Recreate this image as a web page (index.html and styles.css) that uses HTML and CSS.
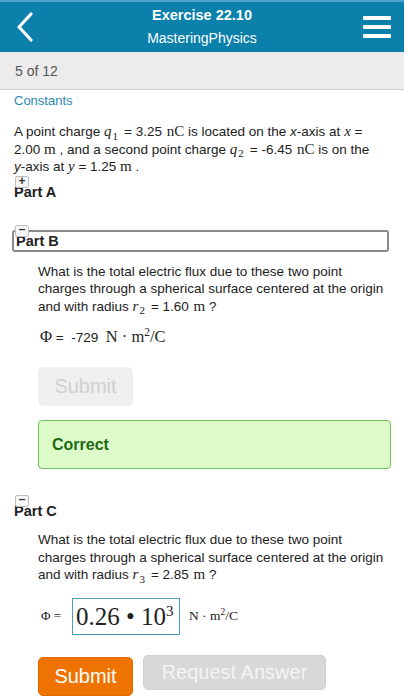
FILE: index.html
```html
<!DOCTYPE html>
<html>
<head>
<meta charset="utf-8">
<link rel="stylesheet" href="styles.css">
</head>
<body>
<header class="topbar">
  <div class="back">
    <svg width="18" height="30" viewBox="0 0 18 30"><path d="M15 2 L3 15 L15 28" fill="none" stroke="#fff" stroke-width="3.2" stroke-linecap="round" stroke-linejoin="round"/></svg>
  </div>
  <div class="titles">
    <div class="title">Exercise 22.10</div>
    <div class="subtitle">MasteringPhysics</div>
  </div>
  <div class="menu">
    <span class="bar"></span><span class="bar"></span><span class="bar"></span>
  </div>
</header>
<div class="progress">5 of 12</div>
<main class="content">
  <div class="constants">Constants</div>
  <p class="intro">A point charge <span class="mv">q</span><sub class="ms">1</sub><span class="eq">= 3.25</span> <span class="mu">nC</span> is located on the <i>x</i>-axis at <span class="mv">x</span> =<br>2.00 <span class="mu">m</span> , and a second point charge <span class="mv">q</span><sub class="ms">2</sub><span class="eq">= -6.45</span> <span class="mu">nC</span> is on the<br><i>y</i>-axis at <span class="mv">y</span> = 1.25 <span class="mu">m</span> .</p>

  <div class="part-head part-a">
    <span class="toggle">+</span>
    <span class="part-title">Part A</span>
  </div>

  <div class="part-head part-b">
    <span class="toggle minus">–</span>
    <span class="part-title">Part B</span>
  </div>
  <div class="part-body">
    <p class="question">What is the total electric flux due to these two point charges through a spherical surface centered at the origin and with radius <span class="mv">r</span><sub class="ms">2</sub><span class="eq">= 1.60</span> <span class="mu">m</span> ?</p>
    <div class="answer-line"><span class="mu">Φ</span> = &nbsp;-729 &nbsp;<span class="mu">N · m<sup>2</sup>/C</span></div>
    <button class="btn btn-disabled">Submit</button>
    <div class="correct">Correct</div>
  </div>

  <div class="part-head part-c">
    <span class="toggle minus">–</span>
    <span class="part-title">Part C</span>
  </div>
  <div class="part-body">
    <p class="question">What is the total electric flux due to these two point charges through a spherical surface centered at the origin and with radius <span class="mv">r</span><sub class="ms">3</sub><span class="eq">= 2.85</span> <span class="mu">m</span> ?</p>
    <div class="input-row">
      <span class="phi">Φ =</span>
      <span class="input-box">0.26 • 10<sup>3</sup></span>
      <span class="units">N · m<sup>2</sup>/C</span>
    </div>
    <div class="actions">
      <button class="btn btn-submit">Submit</button>
      <button class="btn btn-request">Request Answer</button>
    </div>
  </div>
</main>
</body>
</html>
```
FILE: styles.css
```css
html, body {
  margin: 0;
  padding: 0;
  background: #fff;
}
body {
  font-family: "Liberation Sans", Arial, sans-serif;
  color: #222;
  width: 404px;
  height: 700px;
  overflow: hidden;
}
.topbar {
  height: 50px;
  background: #0a80ab;
  border-top: 2px solid #4aa3c8;
  display: grid;
  grid-template-columns: 60px 1fr 60px;
  align-items: center;
  color: #fff;
}
.back {
  padding-left: 16px;
  display: flex;
  align-items: center;
  height: 30px;
}
.titles {
  text-align: center;
}
.title {
  font-weight: bold;
  font-size: 14.5px;
  line-height: 18px;
  margin-top: -1px;
}
.subtitle {
  font-size: 14px;
  line-height: 18px;
  margin-top: 5px;
}
.menu {
  display: flex;
  flex-direction: column;
  gap: 5px;
  align-items: flex-end;
  padding-right: 13px;
}
.bar {
  display: block;
  width: 28px;
  height: 4px;
  background: #fff;
  border-radius: 1px;
}
.progress {
  height: 37px;
  background: #ececec;
  border-bottom: 1px solid #d2d2d2;
  padding-left: 15px;
  font-size: 14px;
  color: #555;
  display: flex;
  align-items: center;
}
.content {
  padding: 0 14px;
}
.constants {
  margin-top: 3px;
  font-size: 13px;
  line-height: 16px;
  color: #2a8ab3;
}
.intro {
  margin: 14px 0 0;
  font-size: 13.5px;
  line-height: 17.5px;
  color: #222;
  width: 376px;
}
.mv {
  font-family: "Liberation Serif", serif;
  font-style: italic;
  font-size: 15px;
  line-height: 1;
}
.mu {
  font-family: "Liberation Serif", serif;
  font-size: 15px;
  line-height: 1;
}
.ms {
  font-family: "Liberation Serif", serif;
  font-size: 11px;
  line-height: 0;
  margin-left: 1px;
  margin-right: 6px;
}
.eq {
  margin-right: 1px;
}
.part-head {
  position: relative;
  font-size: 14.5px;
  font-weight: bold;
  line-height: 18px;
  color: #222;
}
.toggle {
  position: absolute;
  left: 1px;
  top: -7px;
  width: 12px;
  height: 10px;
  border: 1px solid #bdbdbd;
  border-radius: 2px;
  background: #f6f6f6;
  font-size: 12px;
  line-height: 9px;
  text-align: center;
  color: #333;
  font-weight: bold;
}
.toggle.minus {
  line-height: 7px;
}
.part-a {
  margin-top: 7px;
}
.part-b {
  margin: 29px 1px 0 -2px;
  border: 2px solid #8a8a8a;
  border-radius: 3px;
  padding-left: 2px;
  box-shadow: 0 0 1px rgba(0,0,0,0.2);
}
.part-c {
  margin-top: 33px;
}
.part-body {
  padding-left: 24px;
}
.question {
  margin: 11px 0 0;
  font-size: 13.5px;
  line-height: 17.5px;
  color: #222;
  width: 355px;
}
.answer-line {
  margin-top: 13px;
  margin-left: 2px;
  font-size: 13.5px;
  line-height: 20px;
  color: #222;
}
.answer-line .mu {
  font-size: 16.5px;
}
.answer-line sup, .units sup {
  font-size: 0.7em;
  line-height: 0;
}
.btn {
  font-family: "Liberation Sans", Arial, sans-serif;
  font-size: 20px;
  border-radius: 5px;
  padding: 0;
  display: block;
}
.btn-disabled {
  margin-top: 19px;
  width: 95px;
  height: 39px;
  background: #efefef;
  border: none;
  color: #cfcfcf;
}
.correct {
  margin-top: 14px;
  width: 338px;
  height: 47px;
  border: 1px solid #72c062;
  border-radius: 4px;
  background: #dcfbc8;
  color: #1d6a14;
  font-size: 16px;
  font-weight: bold;
  padding-left: 13px;
  display: flex;
  align-items: center;
}
.input-row {
  margin-top: 14px;
  display: flex;
  align-items: center;
  font-family: "Liberation Serif", serif;
  color: #222;
}
.phi {
  font-size: 13px;
  margin-left: 3px;
  width: 31px;
}
.input-box {
  box-sizing: border-box;
  width: 108px;
  height: 37px;
  border: 1px solid #4d9dbd;
  font-size: 25px;
  line-height: 35px;
  padding-left: 3px;
  color: #222;
}
.input-box sup {
  font-size: 15px;
  line-height: 0;
  vertical-align: 9px;
}
.units {
  margin-left: 9px;
  font-size: 13.5px;
}
.actions {
  margin-top: 20px;
  display: flex;
  align-items: flex-start;
  gap: 10px;
}
.btn-submit {
  margin-top: 2px;
  width: 95px;
  height: 39px;
  background: #ef7300;
  border: 1px solid #e06a00;
  color: #fff;
}
.btn-request {
  width: 183px;
  height: 35px;
  background: #d8d8d8;
  border: 1px solid #d0d0d0;
  color: #f4f4f4;
}
```
